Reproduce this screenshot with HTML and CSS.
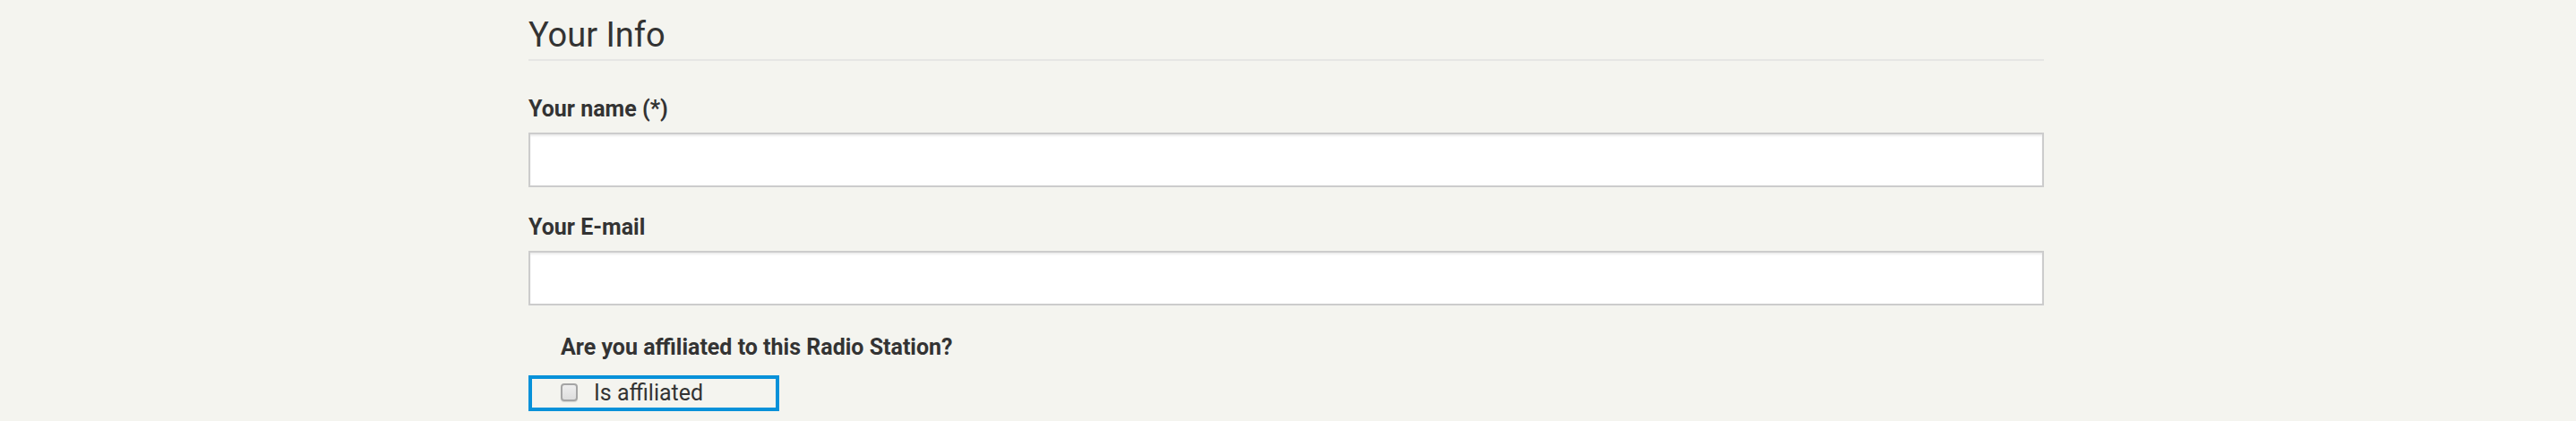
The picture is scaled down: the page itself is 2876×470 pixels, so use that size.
FILE: index.html
```html
<!DOCTYPE html>
<html lang="en">
<head>
<meta charset="utf-8">
<title>Your Info</title>
<link rel="stylesheet" href="styles.css">
</head>
<body>
<div class="page">
  <section class="info">
    <h2 class="section-title">Your Info</h2>
    <div class="field">
      <label class="field-label" for="name">Your name (*)</label>
      <input class="text-input" id="name" type="text">
    </div>
    <div class="field">
      <label class="field-label" for="email">Your E-mail</label>
      <input class="text-input" id="email" type="email">
    </div>
    <div class="affiliation">
      <p class="question">Are you affiliated to this Radio Station?</p>
      <label class="check-box">
        <input class="check" type="checkbox">
        <span class="check-text">Is affiliated</span>
      </label>
    </div>
  </section>
</div>
</body>
</html>
```

FILE: styles.css
```css
html, body {
  margin: 0;
  padding: 0;
  background: #f4f4ef;
}

body {
  font-family: Roboto, "Liberation Sans", Arial, sans-serif;
  color: #333333;
}

.page {
  width: 1692px;
  padding: 17px 4px 0 0;
  margin: 0 auto;
}

.section-title {
  margin: 0;
  font-size: 38px;
  font-weight: 400;
  line-height: 44px;
  color: #333333;
  padding-bottom: 5px;
  border-bottom: 2px solid #e6e6e4;
}

.field {
  margin-top: 37px;
}

.field + .field {
  margin-top: 28px;
}

.field-label {
  display: block;
  font-size: 25px;
  font-weight: 700;
  line-height: 34px;
  margin-bottom: 9px;
  color: #333333;
}

.text-input {
  display: block;
  box-sizing: border-box;
  width: 100%;
  height: 61px;
  margin: 0;
  border: 2px solid #cccccc;
  border-radius: 0;
  background: #ffffff;
  box-shadow: inset 0 2px 2px rgba(0, 0, 0, 0.075);
  font-family: inherit;
  font-size: 24px;
  padding: 0 12px;
  outline: none;
}

.affiliation {
  margin-top: 30px;
}

.question {
  margin: 0;
  padding-left: 36px;
  font-size: 25px;
  font-weight: 700;
  line-height: 34px;
  color: #333333;
}

.check-box {
  margin-top: 14px;
  box-sizing: border-box;
  width: 280px;
  height: 40px;
  border: 4px solid #0791d9;
  display: flex;
  align-items: center;
  padding-left: 32px;
}

.check {
  -webkit-appearance: none;
  appearance: none;
  box-sizing: border-box;
  width: 19px;
  height: 20px;
  margin: 0 18px 2px 0;
  border: 2px solid #a5a5a5;
  border-radius: 4px;
  background: linear-gradient(#eeeeee, #dedede);
  box-shadow: 0 1px 1px rgba(0, 0, 0, 0.12);
  flex: none;
}

.check-text {
  font-size: 25px;
  font-weight: 400;
  line-height: 32px;
  color: #333333;
}
```
